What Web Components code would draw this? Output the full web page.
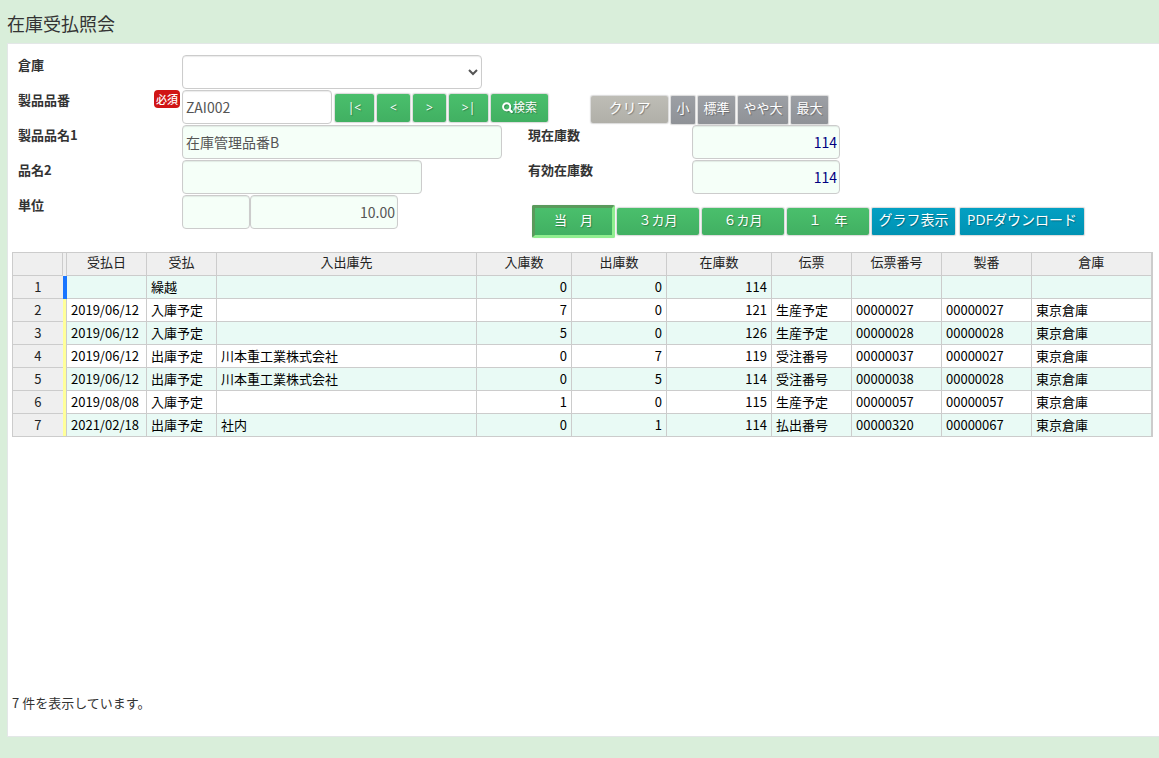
<!DOCTYPE html>
<html lang="ja">
<head>
<meta charset="utf-8">
<title>在庫受払照会</title>
<style>
body{margin:0;background:#d9eeda;color:#333;font:13px/20px "Noto Sans CJK JP",sans-serif}
</style>
</head>
<body>
<stock-page heading="在庫受払照会">
  <stock-form></stock-form>
  <stock-table></stock-table>
  <span slot="status">7 件を表示しています。</span>
</stock-page>

<template id="page-tpl">
<style>
:host{display:flex;flex-direction:column;min-height:100vh;box-sizing:border-box;padding:10px 0 21px 7px}
h1{margin:0 0 7px;font-size:18px;font-weight:400;line-height:26px}
main{flex:1;display:flex;flex-direction:column;background:#fff;border:1px solid #e3e7e7;border-right:0;padding:11px 6px 20px 4px}
footer{margin-top:auto;padding-bottom:3px}
</style>
<h1></h1>
<main><slot></slot><footer><slot name="status"></slot></footer></main>
</template>

<template id="button-tpl">
<style>
:host{display:inline-block}
button{display:block;box-sizing:border-box;width:100%;height:29px;margin:0;padding:0 0 3px;border:1px solid #ddd;border-radius:3px;background:linear-gradient(#4abf6c,#41b062);color:#fff;font:13px/20px "Open Sans","Noto Sans CJK JP",sans-serif;text-align:center;white-space:pre;text-shadow:1px 1px 1px rgba(0,0,0,.3);box-shadow:0 0 1px #ccc}
:host([kind=nav]) button{height:30px;padding-bottom:1px;font-size:12px}
:host([kind=clear]) button{font-size:14px;background:linear-gradient(#bebdb6,#b0afa8)}
:host([kind=size]) button{height:30px;padding-bottom:4px;background:linear-gradient(#9da0a5,#8f9297);border-radius:2px}
:host([kind=blue]) button{font-size:14px;background:linear-gradient(#03a0c3,#0092b3);border-radius:2px}
:host([pressed]) button{height:33px;border:3px solid;border-color:#5a9a5c #90ee90 #90ee90 #5a9a5c;border-radius:2px}
</style>
<button type="button"><slot></slot></button>
</template>

<template id="form-tpl">
<style>
:host{display:block}
form{margin:0 0 15px 6px;display:flex;flex-direction:column;gap:1px}
.row{display:flex;height:34px;align-items:flex-start}
.row:last-child{height:36px}
.label{width:136px;flex:none;font-weight:700}
.flag{width:28px;flex:none}
.req{display:block;width:26px;height:18px;border-radius:4px;background:#d01515;color:#fff;font:500 11px/18px "Noto Sans CJK JP",sans-serif;text-align:center}
.field{width:346px;flex:none;display:flex}
.wide{width:408px}
.right{width:164px;flex:none;font-weight:700}
input,select{display:block;box-sizing:border-box;height:34px;margin:0;padding:0 3px;border:1px solid #ccc;border-radius:4px;background:#fff;color:#555;font:14px/20px "Noto Sans CJK JP",sans-serif;box-shadow:inset 0 1px 1px rgba(0,0,0,.08)}
select{padding-right:4px}
input[readonly]{background:#f5fff8}
.num{text-align:right;padding-right:2px}
input.stock{color:#000080;width:148px}
.w68{width:68px}.w148{width:148px}.w150{width:150px}.w240{width:240px}.w300{width:300px}.w320{width:320px}
.group{display:flex;gap:1px;align-items:flex-start}
.sizes{padding-top:5px}
.nav{margin-left:2px;padding-top:3px}
.b1{width:41px}.b2{width:35px}.b3{width:59px}
.s1{width:26px}.s2{width:39px}.s3{width:52px}.c{width:79px}
.q{width:83px}.p{width:84px}.g{width:85px;margin-right:2px}.d{width:126px}
.periods{margin-left:4px;padding-top:12px}
.periods [pressed]{margin-top:-2px}
.icon{width:11px;height:11px;vertical-align:-1px;filter:drop-shadow(1px 1px 0 rgba(0,0,0,.25))}
</style>
<form>
  <div class="row"><label class="label" for="wh">倉庫</label><span class="flag"></span>
    <div class="field"><select id="wh" class="w300"><option></option></select></div></div>
  <div class="row"><label class="label" for="code">製品品番</label><span class="flag"><span class="req">必須</span></span>
    <div class="field wide"><input id="code" class="w150" value="ZAI002">
      <div class="group nav"><tool-button kind="nav" class="b1">|&lt;</tool-button><tool-button kind="nav" class="b2">&lt;</tool-button><tool-button kind="nav" class="b2">&gt;</tool-button><tool-button kind="nav" class="b1">&gt;|</tool-button><tool-button kind="nav" class="b3"><svg class="icon" viewBox="0 0 11 11"><circle cx="4.7" cy="4.8" r="3.6" fill="none" stroke="#fff" stroke-width="2"/><path d="M7.3 7.5L9.7 9.8" stroke="#fff" stroke-width="2.4" stroke-linecap="round"/></svg>検索</tool-button></div></div>
    <div class="group sizes"><tool-button kind="clear" class="c">クリア</tool-button><tool-button kind="size" class="s1">小</tool-button><tool-button kind="size" class="s2">標準</tool-button><tool-button kind="size" class="s3">やや大</tool-button><tool-button kind="size" class="s2">最大</tool-button></div></div>
  <div class="row"><label class="label" for="n1">製品品名1</label><span class="flag"></span>
    <div class="field"><input id="n1" class="w320" readonly value="在庫管理品番B"></div>
    <label class="right" for="cur">現在庫数</label><input id="cur" class="num stock" readonly value="114"></div>
  <div class="row"><label class="label" for="n2">品名2</label><span class="flag"></span>
    <div class="field"><input id="n2" class="w240" readonly></div>
    <label class="right" for="avail">有効在庫数</label><input id="avail" class="num stock" readonly value="114"></div>
  <div class="row"><label class="label" for="unit">単位</label><span class="flag"></span>
    <div class="field"><input id="unit" class="w68" readonly><input aria-label="単位数" class="num w148" readonly value="10.00"></div>
    <div class="group periods"><tool-button pressed class="q">当　月</tool-button><tool-button class="p">３カ月</tool-button><tool-button class="p">６カ月</tool-button><tool-button class="p">１　年</tool-button><tool-button kind="blue" class="g">グラフ表示</tool-button><tool-button kind="blue" class="d">PDFダウンロード</tool-button></div></div>
</form>
</template>

<template id="table-tpl">
<style>
:host{display:block}
table{border-collapse:collapse;table-layout:fixed;width:1140px;color:#000;border-right:2px solid #ccc;margin-top:6px}
th,td{box-sizing:border-box;height:23px;padding:0 4px;border:1px solid #ccc;line-height:20px;font-weight:400;text-align:left;white-space:nowrap;overflow:hidden}
th{background:#efefef;color:#222;text-align:center}
thead th{vertical-align:top;line-height:18px}
tbody tr:nth-child(odd) td{background:#e9faf5}
.n{text-align:right}
tbody tr td.mark{padding:0;border-top-style:hidden;border-left-style:hidden}
tbody tr:nth-child(n) td.mark{background:#ffff99}
tbody tr:first-child td.mark{background:#1a75ff;border-right-color:#1a75ff}
</style>
<table><colgroup></colgroup><thead><tr></tr></thead><tbody></tbody></table>
</template>

<script>
const stamp = (el, id) => {
  const root = el.attachShadow({mode: 'open'});
  root.append(document.getElementById(id).content.cloneNode(true));
  return root;
};

class ToolButton extends HTMLElement {
  constructor() { super(); stamp(this, 'button-tpl'); }
}
customElements.define('tool-button', ToolButton);

class StockForm extends HTMLElement {
  constructor() { super(); stamp(this, 'form-tpl'); }
}
customElements.define('stock-form', StockForm);

class StockTable extends HTMLElement {
  constructor() {
    super();
    const root = stamp(this, 'table-tpl');
    const widths = [50, 4, 80, 70, 260, 95, 95, 105, 80, 90, 90, 120];
    const heads = ['', '', '受払日', '受払', '入出庫先', '入庫数', '出庫数', '在庫数', '伝票', '伝票番号', '製番', '倉庫'];
    const rows = [
      ['', '繰越', '', 0, 0, 114, '', '', '', ''],
      ['2019/06/12', '入庫予定', '', 7, 0, 121, '生産予定', '00000027', '00000027', '東京倉庫'],
      ['2019/06/12', '入庫予定', '', 5, 0, 126, '生産予定', '00000028', '00000028', '東京倉庫'],
      ['2019/06/12', '出庫予定', '川本重工業株式会社', 0, 7, 119, '受注番号', '00000037', '00000027', '東京倉庫'],
      ['2019/06/12', '出庫予定', '川本重工業株式会社', 0, 5, 114, '受注番号', '00000038', '00000028', '東京倉庫'],
      ['2019/08/08', '入庫予定', '', 1, 0, 115, '生産予定', '00000057', '00000057', '東京倉庫'],
      ['2021/02/18', '出庫予定', '社内', 0, 1, 114, '払出番号', '00000320', '00000067', '東京倉庫']
    ];
    root.querySelector('colgroup').innerHTML = widths.map(w => `<col style="width:${w}px">`).join('');
    root.querySelector('thead tr').innerHTML = heads.map((h, i) => i === 1 ? '<th style="padding:0"></th>' : `<th scope="col">${h}</th>`).join('');
    root.querySelector('tbody').innerHTML = rows.map((r, i) =>
      `<tr><th scope="row">${i + 1}</th><td class="mark"></td>` +
      r.map(c => `<td${typeof c === 'number' ? ' class="n"' : ''}>${c}</td>`).join('') + '</tr>').join('');
  }
}
customElements.define('stock-table', StockTable);

class StockPage extends HTMLElement {
  constructor() {
    super();
    stamp(this, 'page-tpl').querySelector('h1').textContent = this.getAttribute('heading');
  }
}
customElements.define('stock-page', StockPage);
</script>
</body>
</html>
